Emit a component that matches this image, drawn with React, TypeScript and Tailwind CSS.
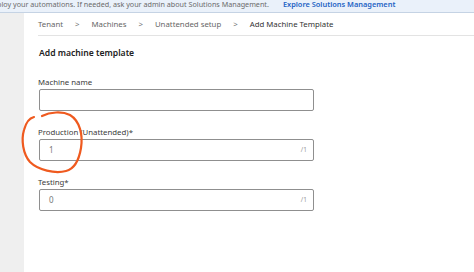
import React from "react";

function Field({ label, value, suffix }: { label: string; value?: string; suffix?: boolean }) {
  return (
    <div className="flex flex-col">
      <div className="h-[12px] text-[7.8px] leading-[12px] text-[#3a3a3a]">{label}</div>
      <div className="mt-[1px] ml-[1px] w-[275px] h-[22px] border border-[#8f8f8f] rounded-[2px] flex items-center justify-between pl-[9px] pr-[6px] bg-white">
        <span className="text-[8px] text-[#777]">{value ?? ""}</span>
        {suffix && <span className="text-[6.5px] text-[#999]">/1</span>}
      </div>
    </div>
  );
}

export default function App() {
  return (
    <div className="w-[474px] h-[272px] bg-white overflow-hidden relative" style={{ fontFamily: '"Noto Sans", "Open Sans", sans-serif' }}>
      <div className="h-[13px] bg-[#eaf1fa] border-b border-[#c5d3e4] overflow-hidden flex items-start whitespace-nowrap leading-[10px]">
        <div className="-mt-[1px] -ml-[3px] text-[7.2px] text-[#6b6b6b]">ploy your automations. If needed, ask your admin about Solutions Management.</div>
        <div className="-mt-[1px] ml-[14px] text-[7.4px] text-[#2463c4] font-semibold">Explore Solutions Management</div>
      </div>
      <div className="flex h-[259px]">
        <div className="w-[24px] bg-[#efefef] shrink-0" />
        <div className="flex-1 flex flex-col pl-[14px]">
          <div className="h-[23px] border-b border-[#e3e3e3] flex items-center text-[7.8px] text-[#666] pt-[1px]">
            <span>Tenant</span>
            <span className="mx-[12px] text-[#777]">&gt;</span>
            <span>Machines</span>
            <span className="mx-[12px] text-[#777]">&gt;</span>
            <span>Unattended setup</span>
            <span className="mx-[12px] text-[#777]">&gt;</span>
            <span className="text-[#333]">Add Machine Template</span>
          </div>
          <div className="mt-[10px] ml-[1px] text-[8.6px] font-semibold text-[#222] leading-[14px]">Add machine template</div>
          <div className="mt-[16px] flex flex-col gap-[15px]">
            <Field label="Machine name" />
            <Field label="Production (Unattended)*" value="1" suffix />
            <Field label="Testing*" value="0" suffix />
          </div>
        </div>
      </div>
      <svg className="absolute left-0 top-0" width="474" height="272" viewBox="0 0 474 272" fill="none">
        <path d="M42 116 C50 112, 62 111, 70 115 C80 121, 83 135, 81 148 C79 160, 74 169, 66 171 C55 174, 38 170, 30 162 C23 154, 21 140, 24 130 C26 122, 30 118, 34 117"
          stroke="#ef5a1f" strokeWidth="2.2" strokeLinecap="round" />
      </svg>
    </div>
  );
}
